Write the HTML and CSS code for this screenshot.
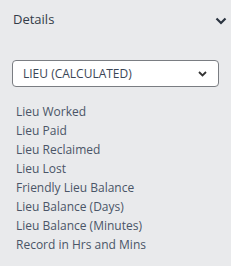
FILE: index.html
```html
<!DOCTYPE html>
<html lang="en">
<head>
    <meta charset="UTF-8">
    <title>Details</title>
    <link rel="stylesheet" href="styles.css">
</head>
<body>
    <div class="panel">
        <div class="panel-header">
            <span class="panel-title">Details</span>
            <svg class="toggle" width="12" height="8" viewBox="0 0 12 8">
                <path d="M1.5 1.5 L6 6 L10.5 1.5" fill="none" stroke="#2b3440" stroke-width="2.2"/>
            </svg>
        </div>
        <div class="select">
            <span>LIEU (CALCULATED)</span>
            <svg width="9" height="6" viewBox="0 0 9 6">
                <path d="M1 1 L4.5 4.5 L8 1" fill="none" stroke="#333" stroke-width="1.8"/>
            </svg>
        </div>
        <ul class="fields">
            <li>Lieu Worked</li>
            <li>Lieu Paid</li>
            <li>Lieu Reclaimed</li>
            <li>Lieu Lost</li>
            <li>Friendly Lieu Balance</li>
            <li>Lieu Balance (Days)</li>
            <li>Lieu Balance (Minutes)</li>
            <li>Record in Hrs and Mins</li>
        </ul>
    </div>
</body>
</html>
```

FILE: styles.css
```css
body {
    margin: 0;
    background-color: #e9eaec;
    font-family: "Open Sans", sans-serif;
}
.panel {
    height: 266px;
    padding: 0 4px 0 12px;
}
.panel-header {
    display: flex;
    justify-content: space-between;
    align-items: center;
    height: 38px;
    padding-left: 1px;
}
.panel-title {
    font-size: 13px;
    color: #333c48;
}
.toggle {
    margin-top: 4px;
}
.select {
    display: flex;
    justify-content: space-between;
    align-items: center;
    box-sizing: border-box;
    width: 207px;
    height: 27px;
    margin-top: 22px;
    padding: 0 11px 0 10px;
    background-color: #fff;
    border: 1px solid #7a7d82;
    border-radius: 4px;
    font-size: 12px;
    color: #3b4656;
}
.fields {
    list-style: none;
    margin: 15px 0 0;
    padding: 0 0 0 4px;
}
.fields li {
    font-size: 12px;
    line-height: 19px;
    color: #4a5567;
}
```
